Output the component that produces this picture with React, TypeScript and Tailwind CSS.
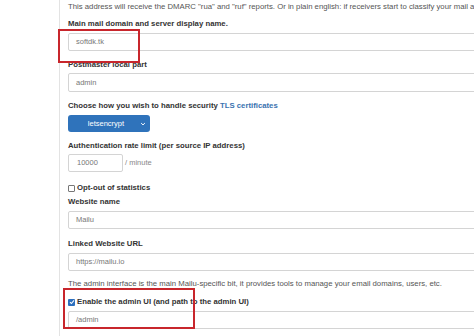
import React from "react";

const Label = ({ children, className = "" }: { children: React.ReactNode; className?: string }) => (
  <div className={"h-[10px] text-[7.75px] leading-[10px] font-bold text-[#333] whitespace-nowrap " + className}>{children}</div>
);

const Field = ({ value, className = "w-[430px]" }: { value: string; className?: string }) => (
  <div
    className={
      "h-[18px] shrink-0 border border-[#d4d4d4] rounded-[2px] pl-[7px] flex items-center text-[7.5px] text-[#777] bg-white " +
      className
    }
  >
    {value}
  </div>
);

const CheckBox = ({ checked }: { checked?: boolean }) =>
  checked ? (
    <span className="w-[7px] h-[7px] rounded-[1px] bg-[#2c6fbe] flex items-center justify-center shrink-0">
      <svg viewBox="0 0 8 8" className="w-[6px] h-[6px]">
        <path d="M1.3 4.2 L3.2 6 L6.7 1.8" fill="none" stroke="white" strokeWidth="1.4" />
      </svg>
    </span>
  ) : (
    <span className="w-[7px] h-[7px] rounded-[1px] border border-[#777] bg-white shrink-0" />
  );

export default function App() {
  return (
    <div
      className="relative w-[474px] h-[336px] overflow-hidden bg-white"
      style={{ fontFamily: '"Liberation Sans", Arial, sans-serif' }}
    >
      <div className="ml-[59px] border-l border-[#e3e3e3] pl-[8px] h-[336px] flex flex-col">
        <div className="mt-[2px] h-[10px] text-[7.75px] leading-[10px] text-[#555] whitespace-nowrap">
          This address will receive the DMARC "rua" and "ruf" reports. Or in plain english: if receivers start to classify your mail as spam
        </div>

        <Label className="mt-[7px]">Main mail domain and server display name.</Label>
        <Field value="softdk.tk" className="w-[430px] mt-[4px]" />

        <Label className="mt-[9px]">Postmaster local part</Label>
        <Field value="admin" className="w-[430px] mt-[3px] h-[19px]" />

        <Label className="mt-[9px]">
          Choose how you wish to handle security <span className="text-[#3a72b0]">TLS certificates</span>
        </Label>
        <div className="mt-[4px] h-[17px] w-[82px] rounded-[3px] bg-[#2f73bb] flex items-center text-white text-[7.5px]">
          <span className="flex-1 text-center pl-[4px]">letsencrypt</span>
          <svg viewBox="0 0 8 8" className="w-[6px] h-[6px] mr-[4px]">
            <path d="M1.5 2.8 L4 5.2 L6.5 2.8" fill="none" stroke="white" strokeWidth="1.3" />
          </svg>
        </div>

        <Label className="mt-[9px]">Authentication rate limit (per source IP address)</Label>
        <div className="mt-[3px] flex items-center">
          <Field value="10000" className="w-[55px] pl-[8px]" />
          <span className="ml-[2px] text-[7.5px] text-[#888]">/ minute</span>
        </div>

        <div className="mt-[11px] h-[10px] flex items-center gap-[2px]">
          <CheckBox />
          <Label>Opt-out of statistics</Label>
        </div>

        <Label className="mt-[4px]">Website name</Label>
        <Field value="Mailu" className="w-[430px] mt-[4px] h-[17px]" />

        <Label className="mt-[10px]">Linked Website URL</Label>
        <Field value="https://mailu.io" className="w-[430px] mt-[4px]" />

        <div className="mt-[8px] h-[10px] text-[7.75px] leading-[10px] text-[#555] whitespace-nowrap">
          The admin interface is the main Mailu-specific bit, it provides tools to manage your email domains, users, etc.
        </div>

        <div className="mt-[8px] h-[10px] flex items-center gap-[2px]">
          <CheckBox checked />
          <Label>Enable the admin UI (and path to the admin UI)</Label>
        </div>
        <Field value="/admin" className="w-[430px] mt-[4px]" />
      </div>

      {/* annotation boxes */}
      <div className="absolute left-[58px] top-[29px] w-[82px] h-[34px] border-2 border-[#c8262c]" />
      <div className="absolute left-[63px] top-[288px] w-[132px] h-[41px] border-2 border-[#c8262c]" />
    </div>
  );
}
